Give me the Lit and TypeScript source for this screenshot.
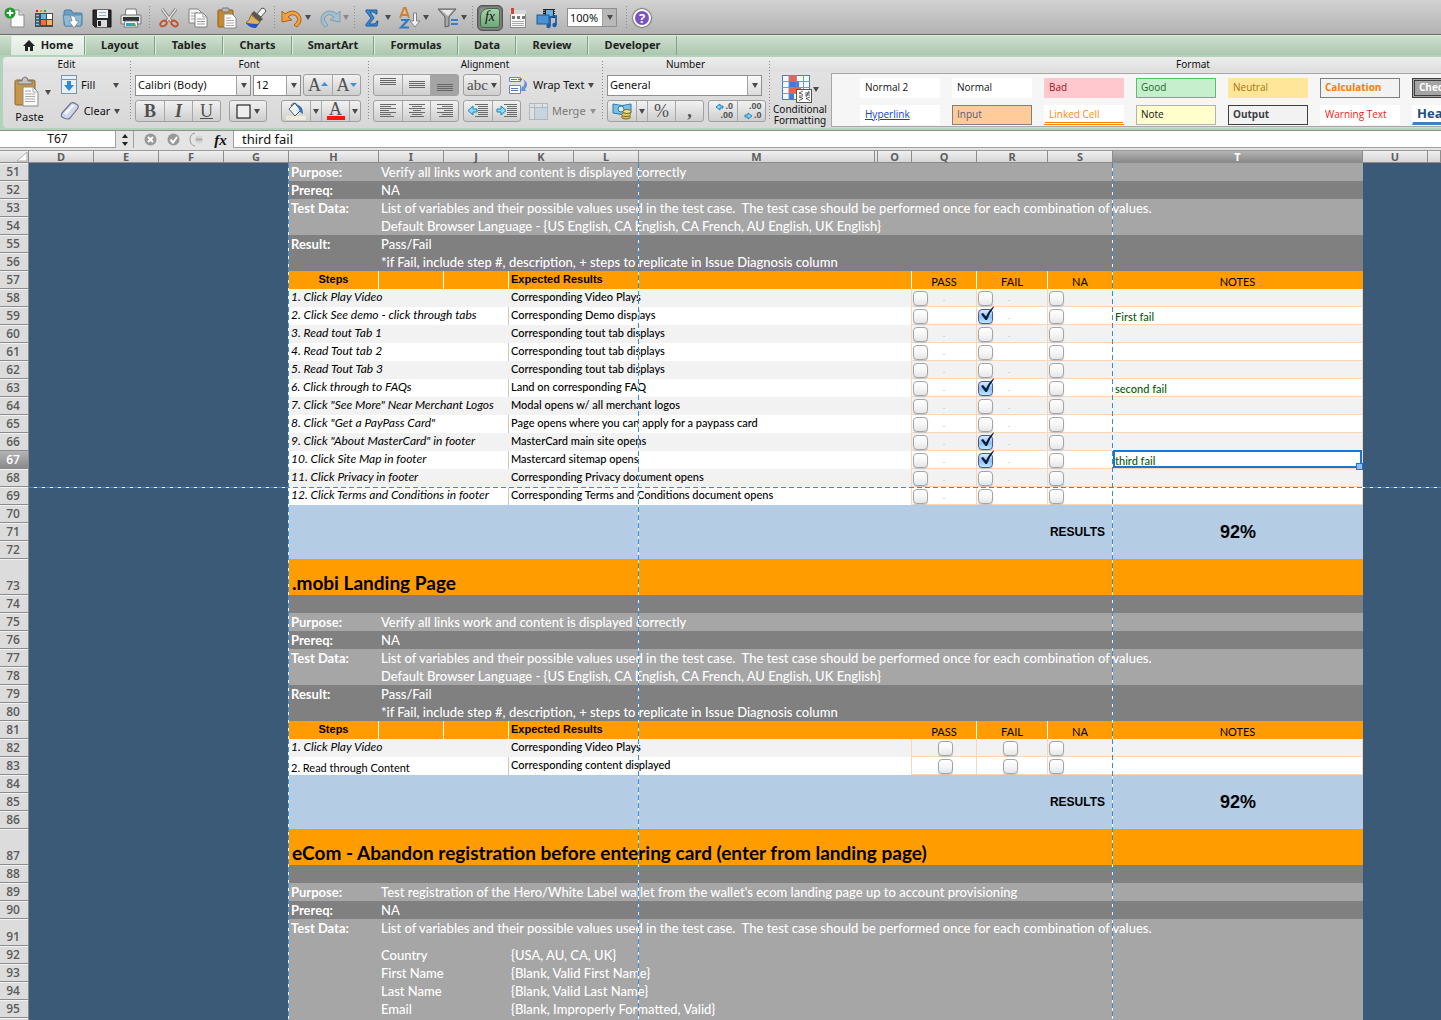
import { LitElement, html, svg, css, nothing, type TemplateResult } from "lit";
import { customElement } from "lit/decorators.js";
import { classMap } from "lit/directives/class-map.js";

const icon = (w: number, h: number, body: unknown) =>
  html`<svg class="ic" width=${w} height=${h} viewBox="0 0 ${w} ${h}" fill="none" aria-hidden="true">${body}</svg>`;

const arrow = (c = "#4a4a4a") => icon(6, 5, svg`<path d="M0 0h6L3 5z" fill=${c} />`);

const ICONS = {
  newDoc: icon(22, 22, svg`<path d="M7 3h8l5 5v12H7z" fill="#fafafa" stroke="#8a8a8a"/><path d="M15 3v5h5" fill="#ddd" stroke="#8a8a8a"/><circle cx="6" cy="6" r="5.500" fill="#1f9a2c"/><path d="M6 2.700v6.600M2.700 6h6.600" stroke="#fff" stroke-width="2"/>`),
  gallery: icon(22, 22, svg`<rect x="2" y="2" width="18" height="18" fill="#4a4a4a"/><rect x="2" y="2" width="18" height="4" fill="#d0d0d0"/><circle cx="4" cy="4" r="1.300" fill="#d22"/><circle cx="8" cy="4" r="1.300" fill="#e90"/><circle cx="12" cy="4" r="1.300" fill="#3a3"/><path d="M3 8.500h3M3 11.500h3M3 14.500h3M3 17.500h3" stroke="#6cf" stroke-width="1.500"/><rect x="8" y="7" width="5" height="5" fill="#5db4f5"/><rect x="14" y="7" width="5" height="5" fill="#fff"/><rect x="8" y="13" width="5" height="5" fill="#f07030"/><rect x="14" y="13" width="5" height="5" fill="#f6b25a"/>`),
  open: icon(22, 22, svg`<path d="M2 5q0-2 2-2h5l2 3h8q1 0 1 1v10q0 2-2 2H4q-2 0-2-2z" fill="#6a9fc4" stroke="#4c7b9d"/><path d="M1 8h19l-1 11H3z" fill="#8dbbd8" stroke="#5b8cb0"/><path d="M8 9q6-1 6 5h3l-5 7-5-7h3q0-3-2-5z" fill="#fff" stroke="#777" stroke-width=".7"/>`),
  save: icon(22, 22, svg`<path d="M2 3h18v17H4l-2-2z" fill="#2a2a2c" stroke="#111"/><rect x="6" y="3" width="11" height="8" fill="#eef3f8"/><path d="M8 5.500h7M8 8.500h7" stroke="#9ab"/><rect x="6" y="13" width="10" height="7" fill="#dcdcdc"/><rect x="7" y="14" width="3" height="5" fill="#222"/>`),
  print: icon(22, 22, svg`<path d="M5 9l1-7h10l1 7z" fill="#fff" stroke="#777"/><path d="M1 9q0-1 1-1h18q1 0 1 1v8H1z" fill="#e2e2e2" stroke="#777"/><rect x="3" y="10" width="16" height="4" fill="#333"/><path d="M5 14h12l1 6H4z" fill="#fff" stroke="#777"/><path d="M6 16h9l1 3H6z" fill="#2aa0d8"/><path d="M11 17h4v2h-4z" fill="#49b04a"/>`),
  cut: icon(22, 22, svg`<path d="M4 2l9 12M18 2L9 14" stroke="#777" stroke-width="3"/><path d="M4 2l9 12M18 2L9 14" stroke="#e4e4e4" stroke-width="1.400"/><ellipse cx="5.500" cy="16.500" rx="3.500" ry="2.500" transform="rotate(-35 5.500 16.500)" stroke="#c2502e" stroke-width="1.800"/><ellipse cx="16.500" cy="16.500" rx="3.500" ry="2.500" transform="rotate(35 16.500 16.500)" stroke="#c2502e" stroke-width="1.800"/>`),
  copy: icon(22, 22, svg`<path d="M2 2h9l3 3v11H2z" fill="#f6f6f6" stroke="#808080"/><path d="M4 6h7M4 9h7M4 12h7" stroke="#aaa"/><path d="M8 6h8l4 4v10H8z" fill="#fff" stroke="#808080"/><path d="M16 6v4h4M10 12h8M10 14.500h8M10 17h8" stroke="#999"/>`),
  paste: icon(22, 22, svg`<rect x="2" y="3" width="15" height="17" rx="1" fill="#c98a2c" stroke="#8c5b14"/><rect x="6" y="1" width="7" height="4" rx="1" fill="#bbb" stroke="#777"/><path d="M8 7h8l4 4v10H8z" fill="#fff" stroke="#888"/><path d="M10 11h5M10 13.500h8M10 16h8M10 18.500h8" stroke="#aaa"/>`),
  brush: icon(22, 22, svg`<path d="M12 7l5-6q3 0 4 3l-5 6z" fill="#f2f2f2" stroke="#555"/><path d="M9 4l9 8-3 3-9-8z" fill="#5a5550"/><path d="M6 8l9 7-4 5-10-4q4-3 5-8z" fill="#e0b060" stroke="#7a5620" stroke-width=".8"/><path d="M1 16l11 1 2-1-3 5Q4 21 1 16z" fill="#2454c8"/>`),
  undo: icon(22, 22, svg`<path d="M1 4l3 3q8-6 14 0 5 7-2 13l-3-2q6-5 2-9-4-3-8 1l4 3-10 2z" fill="#f0a040" stroke="#a8641a"/>`),
  redo: icon(22, 22, svg`<path d="M21 4l-3 3q-8-6-14 0-5 7 2 13l3-2q-6-5-2-9 4-3 8 1l-4 3 10 2z" fill="#a4bfcf" stroke="#7e9bb0"/>`),
  sum: icon(16, 20, svg`<path d="M2 2h11v4h-1.500q0-2-3-2H6l4 6-5 6h5q2 0 3-3h1l-1 5H2v-1.500L7 10 2 3.500z" fill="#3a8ad4" stroke="#1c5aa0"/>`),
  sort: icon(22, 22, svg`<path d="M1 11L5 1h1.500L10 11M2.500 8h6" stroke="#d3802a" stroke-width="2"/><path d="M2 13h7l-7 7.500h8" stroke="#2e7cc8" stroke-width="2.200"/><path d="M14.500 6h3v8h3.500l-5 6-5-6h3.500z" fill="#f2f2f2" stroke="#777" stroke-width=".9"/>`),
  filter: icon(22, 22, svg`<path d="M1 2h18l-7 8v9l-4 1V10z" fill="#a8a8a8" stroke="#5c5c5c"/><path d="M4 3h12l-5 6z" fill="#e8e8e8"/><path d="M14 13h7M14 17h7" stroke="#2f80d0" stroke-width="2"/>`),
  doc: icon(22, 22, svg`<rect x="3.500" y="3.500" width="15" height="17" fill="#f8f8f8" stroke="#8a8a8a"/><path d="M3 3h16v4H3z" fill="#d8d8d8"/><rect x="4" y="1" width="3" height="6" fill="#d8442c"/><path d="M5 9h3v3H5zM10 9h3v3h-3zM15 9h3v3h-3z" fill="#777"/><path d="M5 14.500h12M5 16.500h12M5 18.500h12" stroke="#aaa"/>`),
  media: icon(22, 22, svg`<rect x="7" y="2" width="12" height="9" fill="#222"/><rect x="10" y="3" width="7" height="7" fill="#6ab4e4"/><path d="M8 3v8M18.500 3v8" stroke="#ddd" stroke-dasharray="1 1"/><rect x="1" y="8" width="12" height="9" fill="#4a92d4" stroke="#1f5a96"/><path d="M14 19v-9l6-1v9" stroke="#1c5fa8" stroke-width="1.800"/><circle cx="12.500" cy="19" r="2.200" fill="#1c5fa8"/><circle cx="18.500" cy="18" r="2.200" fill="#1c5fa8"/>`),
  home: icon(12, 12, svg`<path d="M6 1L0 7h2v5h3V8h2v4h3V7h2z" fill="#222"/>`),
  pasteBig: icon(26, 32, svg`<rect x="1" y="4" width="20" height="25" rx="1.500" fill="#c99546" stroke="#8d652a"/><path d="M4 8V5h4q0-4 3-4t3 4h4v3z" fill="#c4c4c4" stroke="#777"/><path d="M9 11h10l5 5v14H9z" fill="#fafafa" stroke="#8b8b8b"/><path d="M19 11v5h5M11 15h6M11 18h10M11 20.500h10M11 23h10M11 25.500h10" stroke="#aaa"/>`),
  fill: icon(16, 20, svg`<rect x=".5" y=".5" width="15" height="18" fill="#e6f0f8" stroke="#7d93a6"/><path d="M1 4.500h14" stroke="#7d93a6"/><path d="M6 6h4v4h3l-5 6-5-6h3z" fill="#3486d6"/>`),
  eraser: icon(20, 20, svg`<path d="M2 12L11 2q2-1 5 1 3 1 2 4l-8 10q-2 2-6 0-4-1-2-5z" fill="#cfd6ee" stroke="#6c7391" stroke-width="1.200"/><path d="M4 12l8-8q2-1 3 0L6 14z" fill="#f5f7ff"/>`),
  border: icon(15, 15, svg`<rect x="1" y="1" width="13" height="13" fill="#eee" stroke="#000"/>`),
  bucket: icon(22, 20, svg`<path d="M4 8l6-6 7 6-7 7z" fill="#eef4f8" stroke="#555"/><path d="M6 5q3-6 6 0" stroke="#555"/><path d="M11 4q7 0 7 9-3-1-4-5z" fill="#2c6fb8"/><rect x="1" y="15" width="20" height="4" fill="#efeadb"/>`),
  wrap: icon(20, 18, svg`<path d="M.5 1.500h11v4H.5zM.5 9.500h11v8H.5z" fill="#fff" stroke="#6a83c4"/><path d="M2 3.500h6M2 12.500h7M2 14.500h7" stroke="#5a79c0"/><path d="M9 3.500h4" stroke="#e23c2c" stroke-width="1.500"/><path d="M14 3q7 5 2 10l1 2-5 0 1-5 1 1q3-4 0-8z" fill="#6a8fd8"/>`),
  merge: icon(19, 17, svg`<rect x=".5" y=".5" width="18" height="16" fill="#dfe6ec" stroke="#8796a4"/><path d="M0 4.500h19M5.500 0v17M13.500 0v4" stroke="#8796a4"/><rect x="6" y="5" width="12" height="11" fill="#b4d0e2"/>`),
  money: icon(20, 18, svg`<path d="M1 2q9 3 18 0v9q-9 3-18 0z" fill="#7cc0e4" stroke="#2c7ab0"/><circle cx="9" cy="7" r="3" fill="#d8eef8" stroke="#2c7ab0"/><ellipse cx="14" cy="15" rx="4.500" ry="2" fill="#d7bf5a" stroke="#7c6a20"/><ellipse cx="14" cy="12.500" rx="4.500" ry="2" fill="#e2cc6a" stroke="#7c6a20"/><ellipse cx="15" cy="9.500" rx="4" ry="2" fill="#efe08c" stroke="#7c6a20"/>`),
  cond: icon(32, 30, svg`<rect x="1.500" y="1.500" width="27" height="24" fill="#f4f8ff" stroke="#4a7ac8"/><path d="M8 1h7v6H8zM8 13h12v6H8z" fill="#f2604c"/><path d="M8 7h10v6H8zM8 19h5v6H8z" fill="#4678dc"/><path d="M1 7.500h28M1 13.500h28M1 19.500h28M8 1v25M15.500 1v25M22.500 1v25" stroke="#6a90cc" stroke-width=".9"/><rect x="15.500" y="15.500" width="15" height="13" fill="#fff" stroke="#555"/><path d="M22 17l-4 2 4 1.500M18 22h4M24 19h5M24 21h5M28 17l-3 6M18 23l4 1.500-4 2M29 23l-4 1.500 4 2" stroke="#333" stroke-width=".8"/>`),
};

const lines = (ws: number[], align: "l" | "c" | "r") =>
  icon(18, 18, ws.map((w, i) => {
    const x = align === "l" ? 1 : align === "c" ? (18 - w) / 2 : 17 - w;
    return svg`<path d="M${x} ${i * 2 + 2.5}h${w}" stroke="#6a6a6a" stroke-width="1"/>`;
  }));
const vlines = (top: number) =>
  icon(18, 18, [0, 1, 2, 3].map((i) => svg`<path d="M1 ${top + i * 2 + 0.5}h16" stroke="#666"/>`));
const indent = (right: boolean) =>
  icon(22, 16, svg`<path d="M8 1.500h13M11 3.500h10M11 5.500h10M11 7.500h10M11 9.500h10M11 11.500h10M8 13.500h13" stroke="#6a6a6a"/><path d=${right ? "M1 6h4V3l5 4.500-5 4.500V9H1z" : "M10 6H6V3L1 7.500 6 12V9h4z"} fill="#8fd8f8" stroke="#1c86b8"/>`);
const decArrow = (right: boolean) =>
  icon(9, 8, svg`<path d=${right ? "M1 3h3V1l4 3-4 3V5H1z" : "M8 3H5V1L1 4l4 3V5h3z"} fill="#8fd8f8" stroke="#1c86b8"/>`);

type Tool = "sep" | "gap" | { name: string; w: string; body: TemplateResult };
const t = (name: string, w: string, body: TemplateResult): Tool => ({ name, w, body });
const dd = (name: string, c?: string): Tool => t(name, "dd", arrow(c));

const TOOLS: Tool[] = [
  t("New", "w29", ICONS.newDoc), t("Gallery", "w29", ICONS.gallery), t("Open", "w29", ICONS.open),
  t("Save", "w29", ICONS.save), t("Print", "w29", ICONS.print), "sep",
  t("Cut", "w29", ICONS.cut), t("Copy", "w29", ICONS.copy), t("Paste", "w29", ICONS.paste),
  t("Format painter", "w29", ICONS.brush), "sep",
  t("Undo", "w24", ICONS.undo), dd("Undo list"), "gap", t("Redo", "w24", ICONS.redo), dd("Redo list", "#888"), "sep",
  t("AutoSum", "w24", ICONS.sum), dd("Sum list"), "gap", t("Sort", "w24", ICONS.sort), dd("Sort list"), "gap",
  t("Filter", "w24", ICONS.filter), dd("Filter list"), "sep",
];

const TABS = [["Home", 74], ["Layout", 70], ["Tables", 68], ["Charts", 69], ["SmartArt", 82], ["Formulas", 84], ["Data", 58], ["Review", 72], ["Developer", 89]] as const;

const STYLES = [
  ["Normal 2", ""], ["Normal", ""], ["Bad", "bad"], ["Good", "good"], ["Neutral", "neutral"], ["Calculation", "calc"], ["Check Cell", "check"],
  ["Hyperlink", "hyper"], ["Input", "inp"], ["Linked Cell", "linked"], ["Note", "note"], ["Output", "output"], ["Warning Text", "warn"], ["Heading 1", "heading"],
];

const COLS: [string, number][] = [
  ["D", 65], ["E", 65], ["F", 65], ["G", 65], ["H", 90], ["I", 65], ["J", 65], ["K", 65], ["L", 65],
  ["M", 236], ["", 3], ["O", 34], ["Q", 65], ["R", 71], ["S", 65], ["T", 250], ["U", 65], ["", 0],
];

type Row =
  | { k: "info"; tone: "dark" | "light"; label?: string; text?: string; tall?: boolean }
  | { k: "vars"; name: string; value: string }
  | { k: "head"; first?: boolean }
  | { k: "step"; n: number; step: string; result: string; fail?: boolean; note?: string; dots: string; plain?: boolean; mid?: boolean }
  | { k: "results" }
  | { k: "rest" }
  | { k: "title"; text: string };

const LIST = "List of variables and their possible values used in the test case.\u00a0 The test case should be performed once for each combination of values.";
const intro = (purpose: string): Row[] => [
  { k: "info", tone: "light", label: "Purpose:", text: purpose },
  { k: "info", tone: "dark", label: "Prereq:", text: "NA" },
];
const common: Row[] = [
  { k: "info", tone: "light", label: "Test Data:", text: LIST },
  { k: "info", tone: "light", text: "Default Browser Language - {US English, CA English, CA French, AU English, UK English}" },
  { k: "info", tone: "dark", label: "Result:", text: "Pass/Fail" },
  { k: "info", tone: "dark", text: "*if Fail, include step #, description, + steps to replicate in Issue Diagnosis column" },
];
const VERIFY = "Verify all links work and content is displayed correctly";

const steps: [string, string, string, string?][] = [
  ["Click Play Video", "Corresponding Video Plays", "QR"],
  ["Click See demo - click through tabs", "Corresponding Demo displays", "R", "First fail"],
  ["Read tout Tab 1", "Corresponding tout tab displays", "QR"],
  ["Read Tout tab 2", "Corresponding tout tab displays", "Q"],
  ["Read Tout Tab 3", "Corresponding tout tab displays", "QR"],
  ["Click through to FAQs", "Land on corresponding FAQ", "QR", "second fail"],
  ['Click "See More" Near Merchant Logos', "Modal opens w/ all merchant logos", "QR"],
  ['Click "Get a PayPass Card"', "Page opens where you can apply for a paypass card", "QR"],
  ['Click "About MasterCard" in footer', "MasterCard main site opens", "QR", ""],
  ["Click Site Map in footer", "Mastercard sitemap opens", "QR", "third fail"],
  ["Click Privacy in footer", "Corresponding Privacy document opens", "QR"],
  ["Click Terms and Conditions in footer", "Corresponding Terms and Conditions document opens", "Q"],
];

const ROWS: Row[] = [
  ...intro(VERIFY), ...common, { k: "head", first: true },
  ...steps.map(([step, result, dots, note], i): Row => ({ k: "step", n: i + 1, step, result, dots, fail: note !== undefined, note })),
  { k: "results" }, { k: "rest" }, { k: "rest" },
  { k: "title", text: ".mobi Landing Page" }, { k: "info", tone: "dark" },
  ...intro(VERIFY), ...common, { k: "head" },
  { k: "step", n: 1, step: "Click Play Video", result: "Corresponding Video Plays", dots: "", mid: true },
  { k: "step", n: 2, step: "Read through Content", result: "Corresponding content displayed", dots: "", plain: true, mid: true },
  { k: "results" }, { k: "rest" }, { k: "rest" },
  { k: "title", text: "eCom - Abandon registration before entering card (enter from landing page)" }, { k: "info", tone: "dark" },
  ...intro("Test registration of the Hero/White Label wallet from the wallet's ecom landing page up to account provisioning"),
  { k: "info", tone: "light", label: "Test Data:", text: LIST, tall: true },
  { k: "vars", name: "Country", value: "{USA, AU, CA, UK}" },
  { k: "vars", name: "First Name", value: "{Blank, Valid First Name}" },
  { k: "vars", name: "Last Name", value: "{Blank, Valid Last Name}" },
  { k: "vars", name: "Email", value: "{Blank, Improperly Formatted, Valid}" },
  { k: "info", tone: "light" },
];

@customElement("check-mark")
export class CheckMark extends LitElement {
  static properties = { checked: { type: Boolean }, label: { type: String } };
  declare checked: boolean;
  declare label: string;
  static styles = css`
    :host { display: block; position: relative; width: 15px; height: 15px; }
    input { appearance: none; display: block; box-sizing: border-box; margin: 0; width: 15px; height: 15px; border: 1px solid #a4a4a4; border-radius: 4px; background: linear-gradient(#fff, #f6f6f6 50%, #e6e6e6); box-shadow: 0 1px 1px #c4c4c4; }
    input:checked { border-color: #4c5a90; background: linear-gradient(#d8ecff, #8cc0f4 55%, #c0ecff); }
    svg { position: absolute; left: 2px; top: -3px; pointer-events: none; }
  `;
  render() {
    return html`<input type="checkbox" aria-label=${this.label} .checked=${this.checked} />
      ${this.checked ? html`<svg width="15" height="16" viewBox="0 0 15 16"><path d="M1 8l2-1 3 3.500Q9 4 13.500.500l.5.500Q9.500 7 7 14H5.500z" fill="#0c1a3a" /></svg>` : nothing}`;
  }
}

@customElement("app-root")
export class AppRoot extends LitElement {
  static styles = css`
    :host { display: flex; flex-direction: column; height: 100vh; overflow: hidden; background: #3a5a78; font-family: "Noto Sans", "Open Sans", sans-serif; font-size: 11px; line-height: 14px; color: #111; }
    * { box-sizing: border-box; }
    button, select, input { font: inherit; color: inherit; margin: 0; padding: 0; border: 0; background: none; border-radius: 0; }
    button { display: flex; align-items: center; justify-content: center; flex: none; }
    .ic { display: block; flex: none; }

    .toolbar { display: flex; align-items: center; flex: none; height: 35px; padding-top: 1px; background: linear-gradient(#d2d2d2, #b2b2b2); border-bottom: 1px solid #6c6c6c; }
    .w29 { width: 29px; height: 28px; } .w24 { width: 25px; height: 28px; } .dd { width: 8px; height: 28px; } .gap { width: 5px; }
    .sep { flex: none; width: 9px; height: 24px; background: repeating-linear-gradient(#8c8c8c 0 1px, transparent 1px 3px) 4px 0 / 1px 100% no-repeat; }
    .fx { width: 26px; height: 26px; border: 1px solid #555; border-radius: 5px; background: #8e8e8e; box-shadow: inset 0 0 3px #444; }
    .fx span { width: 20px; height: 20px; border-radius: 8px 3px 3px 3px; border: 1px solid #3e6c48; background: linear-gradient(#a8d0ac, #6fa878); font: italic 14px/16px "Liberation Serif", serif; }
    .combo { display: flex; align-items: stretch; height: 21px; background: #fff; border: 1px solid #8f8f8f; }
    .combo select { appearance: none; flex: 1; min-width: 0; padding: 0 2px; background: #fff; outline: none; }
    .combo i { display: flex; align-items: center; justify-content: center; width: 14px; border-left: 1px solid #a2a2a2; background: linear-gradient(#fafafa, #dcdcdc); }
    .zoom { width: 50px; height: 19px; margin: 0 5px 0 6px; }
    .zoom i { background: #b8b8b8; }
    .help { width: 18px; height: 18px; margin-left: 2px; border-radius: 9px; border: 2px solid #fff; background: #7a52c4; color: #fff; font-weight: 700; font-size: 13px; box-shadow: 0 0 1px 1px #777; }

    .tabs { display: flex; flex: none; height: 20px; padding-left: 11px; background: linear-gradient(#cfe0cf, #acc6ae); border-top: 1px solid #dcebdc; }
    .tab { padding-bottom: 2px; border-right: 1px solid #7fa386; border-left: 1px solid #dcebdc; font-weight: 700; color: #222; gap: 6px; }
    .tab.on { background: linear-gradient(#f0f6f0, #dde9de); }
    .ribbon { flex: none; display: grid; grid-template-columns: 127px 238px 234px 167px minmax(0, 1fr); height: 75px; padding: 2px 0 2px 3px; background: #b4d2ba; overflow: hidden; }
    .group { min-width: 0; background: linear-gradient(#ededed, #dedede 14px, #e2e2e2 15px, #d8d8d8); overflow: hidden; }
    .group + .group { background: repeating-linear-gradient(#8c8c8c 0 1px, transparent 1px 3px) 0 4px / 1px 60px no-repeat, linear-gradient(#ededed, #dedede 14px, #e2e2e2 15px, #d8d8d8); }
    .group:first-child { border-radius: 4px 0 0 4px; }
    .group h2 { margin: 0; height: 17px; font-size: 10px; line-height: 15px; font-weight: 400; text-align: center; }
    .line { display: flex; align-items: center; height: 22px; padding-left: 5px; margin-bottom: 4px; }
    .set { display: flex; height: 22px; border: 1px solid #a0a0a0; border-radius: 3px; background: linear-gradient(#f2f2f2, #cecece); }
    .set button { width: 28px; color: #505050; }
    .set button + button { border-left: 1px solid #a8a8a8; }
    .set button.on { background: #a4a4a4; }
    .set button.slim { width: 11px; }
    .set.one button { width: 36px; gap: 3px; }
    .serif { font: 700 18px/20px "Liberation Serif", serif; }
    .serif.i { font-style: italic; } .serif.u { font-weight: 400; text-decoration: underline; } .serif.n { font-weight: 400; }
    .serif.abc { font-size: 15px; }
    .fontcol { border-bottom: 4px solid #f81800; line-height: 14px; width: 18px; }
    .dec { display: grid; width: 20px; font: 700 9px/9px "Liberation Sans", sans-serif; }
    .dec span { display: flex; align-items: center; justify-content: flex-end; gap: 1px; }
    .plain { gap: 4px; height: 22px; }
    .dim { opacity: .5; }
    .m4 { margin-left: 4px; } .m8 { margin-left: 8px; } .m2 { margin-left: 2px; } .push { margin-left: auto; margin-right: 7px; }
    .cfont { width: 116px; } .csize { width: 48px; } .cnum { width: 155px; }
    .edit { display: flex; }
    .pastecol { display: flex; flex-direction: column; align-items: center; width: 53px; }
    .pastecol button { gap: 5px; height: 36px; padding-left: 6px; }
    .pastecol span { line-height: 14px; }
    .editcol { flex: 1; }
    .editcol .plain { width: 58px; }
    .editcol .plain .ic:last-child { margin-left: auto; }
    .format { min-width: 848px; }
    .format h2 { height: 16px; }
    .fbody { display: flex; }
    .condb { flex-direction: column; width: 62px; height: 54px; font-size: 10px; line-height: 12px; justify-content: flex-start; }
    .condb span { display: flex; align-items: center; height: 30px; margin-top: 1px; }
    .condb small { font-size: 10px; line-height: 11px; }
    .styles { display: grid; grid-template-columns: repeat(7, 80px); gap: 5px 12px; flex: 1; height: 54px; padding: 4px 0 0 28px; background: #f6f6f6; border: 1px solid #a6a6a6; overflow: hidden; }
    .sty { justify-content: flex-start; height: 20px; padding-left: 4px; padding-bottom: 2px; background: #fff; font: 10px/14px "Open Sans", sans-serif; white-space: nowrap; overflow: hidden; border: 1px solid transparent; }
    .bad { background: #ffc7ce; color: #a01018; } .good { background: #c6efce; color: #1c6a24; border: 1px solid #58c068; }
    .neutral { background: #ffe699; color: #a87410; } .calc { background: #f2f2f2; color: #fa7d00; font-weight: 700; border-color: #7f7f7f; }
    .check { background: #a5a5a5; color: #fff; font-weight: 700; border: 3px double #3f3f3f; } .hyper { color: #1040e0; text-decoration: underline; }
    .inp { background: #ffcc99; color: #5a5a80; border-color: #7f7f7f; } .linked { color: #fa8a10; padding-bottom: 0; border-bottom: 3px double #ff8001; }
    .note { background: #ffffcc; border-color: #b2b2b2; } .output { background: #f2f2f2; font-weight: 700; color: #3f3f3f; border-color: #3f3f3f; }
    .warn { color: #f02010; } .heading { color: #1f4e80; font-weight: 700; font-size: 13px; border-bottom: 3px solid #4080c0; }

    .fbar { display: flex; flex: none; height: 20px; background: #e4e4e4; border-top: 1px solid #8e8e8e; padding-bottom: 2px; }
    .fbar input { background: #fff; outline: none; border-bottom: 1px solid #a0a0a0; }
    .name { width: 116px; text-align: center; border-right: 1px solid #a0a0a0; font-size: 12px; }
    .spin { width: 18px; border-right: 1px solid #a0a0a0; }
    .fbtn { width: 23px; }
    .fxl { width: 25px; font: italic 700 15px/16px "Liberation Serif", serif; }
    .formula { flex: 1; min-width: 0; padding-left: 8px; border-left: 1px solid #a0a0a0; font-size: 13px; }

    .sheet { position: relative; flex: 1; min-height: 0; overflow: hidden; }
    table { width: 100%; table-layout: fixed; border-collapse: separate; border-spacing: 0; font-variant-ligatures: none; }
    th, td { padding: 0; white-space: nowrap; }
    thead th { height: 13px; font: 700 11px/11px "Noto Sans", sans-serif; color: #5e5e5e; background: linear-gradient(#f0f0f0, #d6d6d6); border-right: 1px solid #8c8c8c; border-top: 1px solid #9a9a9a; border-bottom: 1px solid #8c8c8c; }
    thead th.sel, tbody th.sel { background: linear-gradient(#b4b4b4, #8a8a8a); color: #fff; }
    tbody th { height: 18px; vertical-align: bottom; padding-right: 2px; font: 600 12px/16px "Open Sans", sans-serif; color: #5c5c5c; background: #dcdcdc; border-right: 1px solid #8c8c8c; border-bottom: 1px solid #8c8c8c; box-shadow: inset 0 1px #f2f2f2; }
    tbody th.sel { box-shadow: none; }
    .corner svg { margin-left: auto; display: block; }
    td { font: 11px/16px "Lato", sans-serif; color: #000; vertical-align: top; }
    .void { background: #3a5a78; }
    .light td.c { background: #a6a6a6; } .dark td.c { background: #808080; }
    .light td.c, .dark td.c { color: #fff; font-size: 13px; line-height: 18px; font-weight: 500; padding-left: 2px; }
    .light td.lab, .dark td.lab { font-weight: 700; }
    .tall th { height: 27px; }
    .head td.c { background: #ff9c00; vertical-align: bottom; text-align: center; border-right: 1px solid #fff; line-height: 14px; }
    .head td.arial { font: 700 11px/17px "Liberation Sans", sans-serif; vertical-align: top; }
    .head td.exp { text-align: left; padding-left: 2px; }
    .head td.nb { border-right-color: #ff9c00; }
    .step td.c { background: #fff; padding-left: 2px; line-height: 16px; font-weight: 500; }
    .step.alt td.c { background: #f2f2f2; }
    .step td.it { font-size: 12px; font-style: italic; font-weight: 400; border-right: 1px solid #c8c8c8; }
    .step td.low { vertical-align: bottom; font-size: 11px; font-style: normal; line-height: 14px; }
    .step.alt td.it { border-right-color: #f2f2f2; }
    .step td.ex { border-right: 1px solid #fcd5b4; }
    .step td.bx { border-right: 1px solid #fcd5b4; border-bottom: 1px solid #fcd5b4; padding-left: 1px; }
    .step td.note-c { border-right: 1px solid #fcd5b4; border-bottom: 1px solid #fcd5b4; color: #0c5a10; vertical-align: bottom; line-height: 14px; }
    .cell { display: flex; align-items: flex-start; height: 17px; padding-top: 2px; }
    .cell .dot { margin-left: 15px; color: #aaa; font-size: 8px; line-height: 14px; }
    .cell.mid { padding-left: 25px; }
    .selcell { position: relative; }
    .selcell::before { content: ""; position: absolute; inset: -1px 0 0 0; border: 2px solid #1a75d8; }
    .selcell::after { content: ""; position: absolute; right: -1px; bottom: -2px; width: 5px; height: 5px; background: #8cc0f8; border: 1px solid #1a75d8; }
    .results td.c { background: #b4cce4; vertical-align: middle; text-align: right; font: 700 12px/16px "Liberation Sans", sans-serif; padding-right: 8px; }
    .results td.pct { text-align: center; font-size: 18px; padding-right: 0; }
    .title th { height: 36px; }
    .title td.c { background: #ff9c00; vertical-align: bottom; font: 700 19px/24px "Lato", sans-serif; padding-left: 3px; }
    .brk { position: absolute; pointer-events: none; }
    .brk.v { top: 13px; bottom: 0; width: 1px; background: repeating-linear-gradient(#2a90ec 0 5px, #fff 5px 8px); }
    .brk.h { left: 29px; right: 0; top: 337px; height: 1px; background: repeating-linear-gradient(90deg, #2a90ec 0 5px, #fff 5px 8px); }
    .x1 { left: 288px; } .x2 { left: 638px; } .x3 { left: 1112px; }
  `;

  private combo(label: string, value: string, cls: string) {
    return html`<label class="combo ${cls}"><select aria-label=${label}><option>${value}</option></select><i>${arrow()}</i></label>`;
  }

  private set(items: [string, unknown, string?][], cls = "") {
    return html`<div class="set ${cls}">${items.map(([name, body, c]) => html`<button class=${c ?? ""} aria-label=${name}>${body}</button>`)}</div>`;
  }

  private ribbon() {
    const A = (up: boolean) => html`<span class="serif n">A</span>${icon(7, 8, svg`<path d=${up ? "M0 5h7L3.500 1z" : "M0 2h7L3.500 6z"} fill="#3c90dc"/>`)}`;
    return html`<div class="ribbon">
      <section class="group"><h2>Edit</h2>
        <div class="edit">
          <div class="pastecol"><button aria-label="Paste">${ICONS.pasteBig}${arrow()}</button><span>Paste</span></div>
          <div class="editcol">
            <div class="line"><button class="plain">${ICONS.fill}Fill${arrow()}</button></div>
            <div class="line"><button class="plain">${ICONS.eraser}Clear${arrow()}</button></div>
          </div>
        </div>
      </section>
      <section class="group"><h2>Font</h2>
        <div class="line">${this.combo("Font", "Calibri (Body)", "cfont")}${this.combo("Font size", "12", "csize m2")}
          <div class="push">${this.set([["Grow font", A(true)], ["Shrink font", A(false)]])}</div></div>
        <div class="line">${this.set([["Bold", html`<span class="serif">B</span>`], ["Italic", html`<span class="serif i">I</span>`], ["Underline", html`<span class="serif u">U</span>`]])}
          <div class="m8">${this.set([["Borders", html`${ICONS.border}${arrow()}`]], "one")}</div>
          <div class="push">${this.set([["Fill colour", ICONS.bucket], ["Fill colours", arrow(), "slim"], ["Font colour", html`<span class="serif n fontcol">A</span>`], ["Font colours", arrow(), "slim"]])}</div></div>
      </section>
      <section class="group"><h2>Alignment</h2>
        <div class="line">${this.set([["Top", vlines(2)], ["Middle", vlines(5)], ["Bottom", vlines(8), "on"]])}
          <div class="m4">${this.set([["Orientation", html`<span class="serif n abc">abc</span>${arrow()}`]], "one")}</div>
          <button class="plain m8">${ICONS.wrap}Wrap Text ${arrow()}</button></div>
        <div class="line">${this.set([["Left", lines([16, 11, 16, 9, 16, 11, 14], "l")], ["Centre", lines([16, 10, 16, 8, 16, 10, 14], "c")], ["Right", lines([16, 11, 16, 9, 16, 11, 14], "r")]])}
          <div class="m4">${this.set([["Decrease indent", indent(false)], ["Increase indent", indent(true)]])}</div>
          <button class="plain m8 dim">${ICONS.merge}Merge ${arrow()}</button></div>
      </section>
      <section class="group"><h2>Number</h2>
        <div class="line">${this.combo("Number format", "General", "cnum")}</div>
        <div class="line">${this.set([["Currency", ICONS.money], ["Currencies", arrow(), "slim"], ["Percent", html`<span class="serif n">%</span>`], ["Comma", html`<span class="serif">,</span>`]])}
          <div class="m4">${this.set([["Increase decimal", html`<span class="dec"><span>${decArrow(false)}.0</span><span>.00</span></span>`], ["Decrease decimal", html`<span class="dec"><span>.00</span><span>${decArrow(true)}.0</span></span>`]])}</div></div>
      </section>
      <section class="group"><div class="format"><h2>Format</h2>
        <div class="fbody">
          <button class="condb"><span>${ICONS.cond}${arrow()}</span><small>Conditional</small><small>Formatting</small></button>
          <div class="styles">${STYLES.map(([n, c]) => html`<button class="sty ${c}">${n}</button>`)}</div>
        </div></div>
      </section>
    </div>`;
  }

  private row(r: Row, i: number) {
    const n = 51 + i;
    const th = html`<th scope="row" class=${classMap({ sel: n === 67 })}>${n}</th><td class="void" colspan="4"></td>`;
    const end = html`<td class="void" colspan="2"></td>`;
    switch (r.k) {
      case "info":
        return html`<tr class="${r.tone} ${r.tall ? "tall" : ""}">${th}<td class="c lab">${r.label}</td><td class="c" colspan="11">${r.text}</td>${end}</tr>`;
      case "vars":
        return html`<tr class="light">${th}<td class="c"></td><td class="c" colspan="2">${r.name}</td><td class="c" colspan="9">${r.value}</td>${end}</tr>`;
      case "head":
        return html`<tr class="head">${th}<td class="c arial">Steps</td><td class="c"></td><td class="c"></td>
          <td class="c arial exp ${r.first ? "" : "nb"}" colspan="5">Expected Results</td><td class="c">PASS</td><td class="c">FAIL</td><td class="c nb">NA</td><td class="c nb">NOTES</td>${end}</tr>`;
      case "step": {
        const box = (col: string, name: string, on = false) => html`<td class="c bx"><div class="cell ${r.mid && col !== "S" ? "mid" : ""}">
          <check-mark .checked=${on} .label=${`Step ${r.n} ${name}`}></check-mark>${r.dots.includes(col) ? html`<span class="dot">.</span>` : nothing}</div></td>`;
        return html`<tr class="step ${r.n % 2 ? "alt" : ""}">${th}<td class="c it ${r.plain ? "low" : ""}" colspan="3">${r.n}. ${r.step}</td>
          <td class="c ex" colspan="5">${r.result}</td>${box("Q", "pass")}${box("R", "fail", r.fail)}${box("S", "not applicable")}
          <td class="c note-c ${n === 67 ? "selcell" : ""}">${r.note}</td>${end}</tr>`;
      }
      case "results":
        return html`<tr class="results">${th}<td class="c" colspan="11" rowspan="3">RESULTS</td><td class="c pct" rowspan="3">92%</td>${end}</tr>`;
      case "rest":
        return html`<tr>${th}${end}</tr>`;
      case "title":
        return html`<tr class="title">${th}<td class="c" colspan="12">${r.text}</td>${end}</tr>`;
    }
  }

  render() {
    return html`
      <div class="toolbar">
        ${TOOLS.map((x) => x === "sep" ? html`<span class="sep"></span>` : x === "gap" ? html`<span class="gap"></span>` : html`<button class=${x.w} aria-label=${x.name}>${x.body}</button>`)}
        <button class="fx" aria-label="Formula builder"><span>fx</span></button>
        <button class="w29" aria-label="Toolbox">${ICONS.doc}</button>
        <button class="w29" aria-label="Media browser">${ICONS.media}</button>
        ${this.combo("Zoom", "100%", "zoom")}<span class="sep"></span>
        <button class="help" aria-label="Help">?</button>
      </div>
      <nav class="tabs">${TABS.map(([name, w], i) => html`<button class="tab ${i ? "" : "on"}" style="width:${w}px">${i ? nothing : ICONS.home}${name}</button>`)}</nav>
      ${this.ribbon()}
      <div class="fbar">
        <input class="name" aria-label="Name box" .value=${"T67"} />
        <button class="spin" aria-label="Names">${icon(6, 12, svg`<path d="M0 4h6L3 0zM0 8h6l-3 4z" fill="#222"/>`)}</button>
        <span class="gap"></span>
        <button class="fbtn" aria-label="Cancel">${icon(13, 13, svg`<circle cx="6.500" cy="6.500" r="6" fill="#999"/><path d="M4 4l5 5M9 4l-5 5" stroke="#fff" stroke-width="2"/>`)}</button>
        <button class="fbtn" aria-label="Accept">${icon(13, 13, svg`<circle cx="6.500" cy="6.500" r="6" fill="#999"/><path d="M3.500 6.500l2.500 3 4-5.500" stroke="#fff" stroke-width="2"/>`)}</button>
        <button class="fbtn" aria-label="Formula options">${icon(15, 15, svg`<path d="M6 1Q1 2 1 7.500T6 14" stroke="#999"/><circle cx="10" cy="7.500" r="4" fill="#d4d4d4"/><path d="M7 7.500h6" stroke="#aaa" stroke-width="2"/>`)}</button>
        <button class="fxl" aria-label="Insert function">fx</button>
        <input class="formula" aria-label="Formula" .value=${"third fail"} />
      </div>
      <div class="sheet">
        <table>
          <colgroup><col width="29" />${COLS.map(([, w]) => (w ? html`<col width=${w} />` : html`<col />`))}</colgroup>
          <thead><tr><th class="corner">${icon(12, 10, svg`<path d="M11 0v9H1z" fill="#fff" stroke="#aaa"/>`)}</th>
            ${COLS.map(([c]) => html`<th scope="col" class=${classMap({ sel: c === "T" })}>${c}</th>`)}</tr></thead>
          <tbody>${ROWS.map((r, i) => this.row(r, i))}</tbody>
        </table>
        <span class="brk v x1"></span><span class="brk v x2"></span><span class="brk v x3"></span><span class="brk h"></span>
      </div>`;
  }
}
